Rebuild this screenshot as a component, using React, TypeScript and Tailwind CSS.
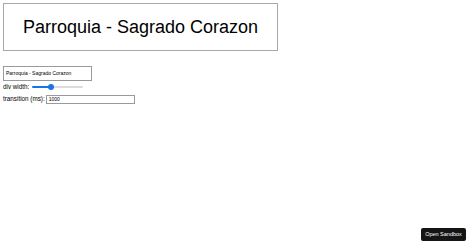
export default function App() {
  return (
    <div className="relative h-[248px] w-[474px] bg-white font-['Liberation_Sans',Arial,sans-serif] text-black">
      <div className="pl-[3px] pt-[3px]">
        <div className="flex h-[48px] w-[275px] items-center justify-center border border-[#a8a8a8]">
          <span className="text-[18px] leading-none">Parroquia - Sagrado Corazon</span>
        </div>

        <div className="mt-[15px] flex h-[15px] w-[89px] items-center border border-[#9a9a9a] px-[2px]">
          <span className="text-[5px] leading-none">Parroquia - Sagrado Corazon</span>
        </div>

        <div className="mt-[1px] flex h-[10px] items-center gap-[3px]">
          <span className="text-[6.3px] leading-none">div width:</span>
          <div className="relative flex h-[6px] w-[51px] items-center">
            <div className="h-[2px] w-[18px] rounded-l-full bg-[#1a73e8]" />
            <div className="h-[2px] flex-1 rounded-r-full bg-[#dcdcdc]" />
            <div className="absolute left-[16px] top-0 h-[6px] w-[6px] rounded-full bg-[#1a73e8]" />
          </div>
        </div>

        <div className="mt-[3px] flex h-[9px] items-center gap-[1px]">
          <span className="text-[6.3px] leading-none">transition (ms):</span>
          <div className="flex h-[9px] w-[89px] items-center border border-[#9a9a9a] px-[2px]">
            <span className="text-[5px] leading-none">1000</span>
          </div>
        </div>
      </div>

      <div className="absolute left-[421px] top-[228px] flex h-[13px] w-[45px] items-center justify-center rounded-[2px] bg-[#151515]">
        <span className="text-[5.5px] leading-none text-white">Open Sandbox</span>
      </div>
    </div>
  )
}
